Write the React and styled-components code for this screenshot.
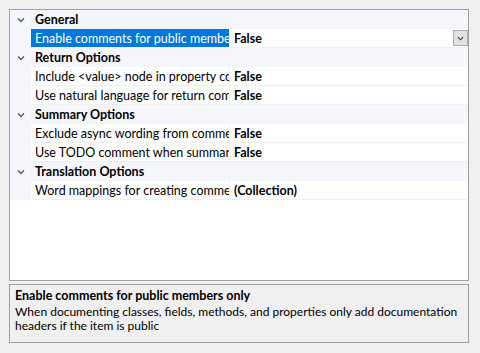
import styled, { createGlobalStyle } from "styled-components";

const Global = createGlobalStyle`
  html,body{margin:0;padding:0;background:#f0f0f0;}
  body{font-family:Lato,"Noto Sans",sans-serif;font-size:12.5px;color:#000;}
`;

const Page = styled.div`
  width:480px;height:353px;box-sizing:border-box;padding:9px 11px 0 9px;
  display:flex;flex-direction:column;gap:3px;
`;
const Grid = styled.div`
  height:272px;box-sizing:border-box;border:1px solid #a0a0a0;background:#fff;
  display:flex;flex-direction:column;overflow:hidden;
`;
const CatRow = styled.div`
  height:19px;flex:none;display:flex;align-items:center;background:#f4f6fb;
`;
const Gutter = styled.div`
  width:21px;flex:none;align-self:stretch;background:#f4f6fb;
  display:flex;align-items:center;justify-content:center;
`;
const CatLabel = styled.span`font-weight:700;padding-left:4px;white-space:nowrap;`;
const PropRow = styled.div`
  height:19px;flex:none;display:flex;box-sizing:border-box;
`;
const NameCell = styled.div`
  width:199px;flex:none;box-sizing:border-box;padding-left:4px;overflow:hidden;white-space:nowrap;
  display:flex;align-items:center;border-right:1px solid #f0f0f0;border-bottom:1px solid #f0f0f0;
  background:${p => p.$selected ? "#0078d7" : "#fff"};
  color:${p => p.$selected ? "#fff" : "#000"};
  ${p => p.$selected && "border-bottom-color:#fff;"}
`;
const ValueCell = styled.div`
  flex:1;display:flex;align-items:center;justify-content:space-between;padding-left:4px;
  font-weight:700;white-space:nowrap;border-bottom:1px solid #f0f0f0;
`;
const DropBtn = styled.div`
  width:15px;height:16px;box-sizing:border-box;border:1px solid #adadad;background:#e1e1e1;
  display:flex;align-items:center;justify-content:center;align-self:flex-start;margin-top:1px;
`;
const Desc = styled.div`
  height:59px;box-sizing:border-box;border:1px solid #a0a0a0;background:#f0f0f0;
  padding:4px 4px 4px 5px;line-height:14px;font-size:12px;
`;
const DescTitle = styled.div`font-weight:700;font-size:12.5px;margin-bottom:2px;`;

const Chevron = ({ size = 8, color = "#555" }) => (
  <svg width={size} height={size} viewBox="0 0 8 8">
    <path d="M1 2.5 L4 5.5 L7 2.5" fill="none" stroke={color} strokeWidth="1.3" />
  </svg>
);

const data = [
  { cat: "General", props: [{ name: "Enable comments for public members only", value: "False", selected: true }] },
  { cat: "Return Options", props: [
    { name: "Include <value> node in property comments", value: "False" },
    { name: "Use natural language for return comments", value: "False" },
  ] },
  { cat: "Summary Options", props: [
    { name: "Exclude async wording from comments", value: "False" },
    { name: "Use TODO comment when summary can't be generated", value: "False" },
  ] },
  { cat: "Translation Options", props: [
    { name: "Word mappings for creating comments", value: "(Collection)" },
  ] },
];

export default function App() {
  return (
    <>
      <Global />
      <Page>
        <Grid>
          {data.map(g => (
            <div key={g.cat}>
              <CatRow>
                <Gutter><Chevron /></Gutter>
                <CatLabel>{g.cat}</CatLabel>
              </CatRow>
              {g.props.map(p => (
                <PropRow key={p.name}>
                  <Gutter />
                  <NameCell $selected={p.selected}>{p.name}</NameCell>
                  <ValueCell>
                    {p.value}
                    {p.selected && <DropBtn><Chevron size={7} color="#444" /></DropBtn>}
                  </ValueCell>
                </PropRow>
              ))}
            </div>
          ))}
        </Grid>
        <Desc>
          <DescTitle>Enable comments for public members only</DescTitle>
          When documenting classes, fields, methods, and properties only add documentation headers if the item is public
        </Desc>
      </Page>
    </>
  );
}
